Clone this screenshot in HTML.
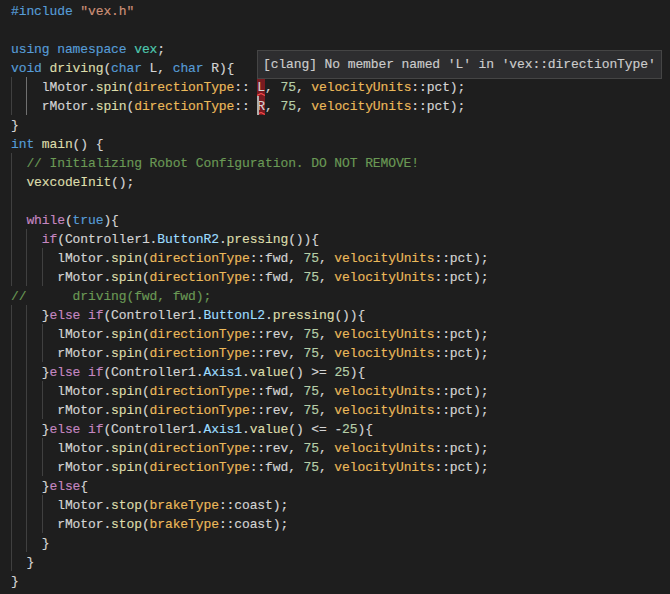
<!DOCTYPE html>
<html><head><meta charset="utf-8"><style>
html,body{margin:0;padding:0;}
body{width:670px;height:594px;overflow:hidden;background:#1E1E1E;position:relative;
font-family:"Liberation Mono",monospace;}
.ln{position:absolute;left:11px;height:19px;line-height:19px;white-space:pre;color:#D4D4D4;
font-size:13px;letter-spacing:-0.103px;-webkit-text-stroke:0.15px currentColor;}
.ln span{}
.g{position:absolute;width:1px;background:#404040;}
.g.act{background:#707070;}
#hl{position:absolute;left:257px;top:77px;width:8px;height:38px;background:#7A1B20;}
#cur{position:absolute;left:257px;top:96px;width:2px;height:19px;background:#AEAFAD;}
.sq{position:absolute;left:257px;width:8px;height:3px;}
#tip{position:absolute;left:257px;top:50px;width:403px;height:27px;background:#2D2D2F;border:1px solid #454545;}
#tip .t{position:absolute;left:5px;top:0;height:27px;line-height:27px;white-space:pre;color:#CCCCCC;font-size:13px;letter-spacing:-0.103px;-webkit-text-stroke:0.15px currentColor;}
</style></head><body>
<div id="hl"></div>
<div class="g" style="left:11px;top:77px;height:38px"></div><div class="g act" style="left:26px;top:77px;height:38px"></div><div class="g" style="left:11px;top:153px;height:133px"></div><div class="g" style="left:11px;top:305px;height:266px"></div><div class="g" style="left:26px;top:229px;height:57px"></div><div class="g" style="left:26px;top:305px;height:247px"></div><div class="g" style="left:42px;top:248px;height:38px"></div><div class="g" style="left:42px;top:324px;height:38px"></div><div class="g" style="left:42px;top:381px;height:38px"></div><div class="g" style="left:42px;top:438px;height:38px"></div><div class="g" style="left:42px;top:495px;height:38px"></div>
<div class="ln" style="top:2px"><span style="color:#569CD6">#include</span> <span style="color:#CE9178">&quot;vex.h&quot;</span></div><div class="ln" style="top:21px"></div><div class="ln" style="top:40px"><span style="color:#569CD6">using</span> <span style="color:#569CD6">namespace</span> <span style="color:#4EC9B0">vex</span>;</div><div class="ln" style="top:59px"><span style="color:#569CD6">void</span> <span style="color:#DCDCAA">driving</span>(<span style="color:#569CD6">char</span> L, <span style="color:#569CD6">char</span> R){</div><div class="ln" style="top:78px">    lMotor.<span style="color:#DCDCAA">spin</span>(<span style="color:#EBB95A">directionType</span>:: L, <span style="color:#B5CEA8">75</span>, <span style="color:#EBB95A">velocityUnits</span>::pct);</div><div class="ln" style="top:97px">    rMotor.<span style="color:#DCDCAA">spin</span>(<span style="color:#EBB95A">directionType</span>:: R, <span style="color:#B5CEA8">75</span>, <span style="color:#EBB95A">velocityUnits</span>::pct);</div><div class="ln" style="top:116px">}</div><div class="ln" style="top:135px"><span style="color:#569CD6">int</span> <span style="color:#DCDCAA">main</span>() {</div><div class="ln" style="top:154px">  <span style="color:#6A9955">// Initializing Robot Configuration. DO NOT REMOVE!</span></div><div class="ln" style="top:173px">  <span style="color:#DCDCAA">vexcodeInit</span>();</div><div class="ln" style="top:192px"></div><div class="ln" style="top:211px">  <span style="color:#C586C0">while</span>(<span style="color:#569CD6">true</span>){</div><div class="ln" style="top:230px">    <span style="color:#C586C0">if</span>(Controller1.<span style="color:#9CDCFE">ButtonR2</span>.<span style="color:#DCDCAA">pressing</span>()){</div><div class="ln" style="top:249px">      lMotor.<span style="color:#DCDCAA">spin</span>(<span style="color:#EBB95A">directionType</span>::fwd, <span style="color:#B5CEA8">75</span>, <span style="color:#EBB95A">velocityUnits</span>::pct);</div><div class="ln" style="top:268px">      rMotor.<span style="color:#DCDCAA">spin</span>(<span style="color:#EBB95A">directionType</span>::fwd, <span style="color:#B5CEA8">75</span>, <span style="color:#EBB95A">velocityUnits</span>::pct);</div><div class="ln" style="top:287px"><span style="color:#6A9955">//      driving(fwd, fwd);</span></div><div class="ln" style="top:306px">    }<span style="color:#C586C0">else</span> <span style="color:#C586C0">if</span>(Controller1.<span style="color:#9CDCFE">ButtonL2</span>.<span style="color:#DCDCAA">pressing</span>()){</div><div class="ln" style="top:325px">      lMotor.<span style="color:#DCDCAA">spin</span>(<span style="color:#EBB95A">directionType</span>::rev, <span style="color:#B5CEA8">75</span>, <span style="color:#EBB95A">velocityUnits</span>::pct);</div><div class="ln" style="top:344px">      rMotor.<span style="color:#DCDCAA">spin</span>(<span style="color:#EBB95A">directionType</span>::rev, <span style="color:#B5CEA8">75</span>, <span style="color:#EBB95A">velocityUnits</span>::pct);</div><div class="ln" style="top:363px">    }<span style="color:#C586C0">else</span> <span style="color:#C586C0">if</span>(Controller1.<span style="color:#9CDCFE">Axis1</span>.<span style="color:#DCDCAA">value</span>() &gt;= <span style="color:#B5CEA8">25</span>){</div><div class="ln" style="top:382px">      lMotor.<span style="color:#DCDCAA">spin</span>(<span style="color:#EBB95A">directionType</span>::fwd, <span style="color:#B5CEA8">75</span>, <span style="color:#EBB95A">velocityUnits</span>::pct);</div><div class="ln" style="top:401px">      rMotor.<span style="color:#DCDCAA">spin</span>(<span style="color:#EBB95A">directionType</span>::rev, <span style="color:#B5CEA8">75</span>, <span style="color:#EBB95A">velocityUnits</span>::pct);</div><div class="ln" style="top:420px">    }<span style="color:#C586C0">else</span> <span style="color:#C586C0">if</span>(Controller1.<span style="color:#9CDCFE">Axis1</span>.<span style="color:#DCDCAA">value</span>() &lt;= -<span style="color:#B5CEA8">25</span>){</div><div class="ln" style="top:439px">      lMotor.<span style="color:#DCDCAA">spin</span>(<span style="color:#EBB95A">directionType</span>::rev, <span style="color:#B5CEA8">75</span>, <span style="color:#EBB95A">velocityUnits</span>::pct);</div><div class="ln" style="top:458px">      rMotor.<span style="color:#DCDCAA">spin</span>(<span style="color:#EBB95A">directionType</span>::fwd, <span style="color:#B5CEA8">75</span>, <span style="color:#EBB95A">velocityUnits</span>::pct);</div><div class="ln" style="top:477px">    }<span style="color:#C586C0">else</span>{</div><div class="ln" style="top:496px">      lMotor.<span style="color:#DCDCAA">stop</span>(<span style="color:#EBB95A">brakeType</span>::coast);</div><div class="ln" style="top:515px">      rMotor.<span style="color:#DCDCAA">stop</span>(<span style="color:#EBB95A">brakeType</span>::coast);</div><div class="ln" style="top:534px">    }</div><div class="ln" style="top:553px">  }</div><div class="ln" style="top:572px">}</div>
<svg class="sq" style="top:93px" width="8" height="3" viewBox="0 0 8 3"><path d="M0 2.5 L4 0.5 L8 2.5" fill="none" stroke="#F44747" stroke-width="1.3"/></svg>
<svg class="sq" style="top:112px" width="8" height="3" viewBox="0 0 8 3"><path d="M0 2.5 L4 0.5 L8 2.5" fill="none" stroke="#F44747" stroke-width="1.3"/></svg>
<div id="cur"></div>
<div id="tip"><div class="t">[clang] No member named 'L' in 'vex::directionType'</div></div>
</body></html>
